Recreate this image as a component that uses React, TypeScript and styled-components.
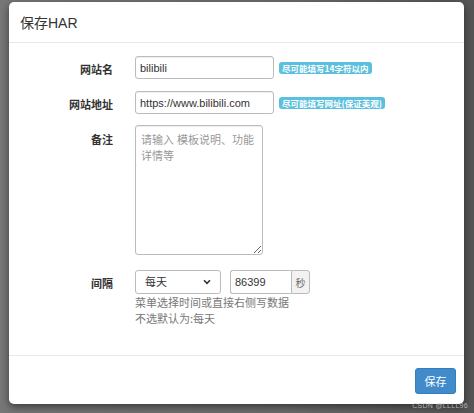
import React from 'react';
import styled, { createGlobalStyle } from 'styled-components';

const GlobalStyle = createGlobalStyle`
  html, body {
    margin: 0;
    padding: 0;
    background: #6d6d6d;
  }
  body {
    font-family: Arial, "Liberation Sans", "Noto Sans CJK SC", sans-serif;
    color: #333;
  }
`;

const Page = styled.div`
  width: 474px;
  height: 413px;
  padding: 2px 10px 0 9px;
  box-sizing: border-box;
  position: relative;
  overflow: hidden;
  background: linear-gradient(90deg, #777 0%, #6d6d6d 60%, #555 100%);
`;

const Modal = styled.div`
  width: 455px;
  height: 402px;
  background: #fff;
  border-radius: 5px;
  box-shadow: 0 3px 9px rgba(0, 0, 0, 0.5);
  display: flex;
  flex-direction: column;
  overflow: hidden;
`;

const Header = styled.div`
  height: 41px;
  padding: 0 11px;
  display: flex;
  align-items: center;
  border-bottom: 1px solid #e8e8e8;
  box-sizing: border-box;
`;

const Title = styled.h4`
  margin: 0;
  font-size: 14px;
  font-weight: normal;
  color: #333;
`;

const Body = styled.div`
  flex: 1;
  padding: 13px 0 0;
  display: flex;
  flex-direction: column;
  gap: 12px;
`;

const Row = styled.div<{ $top?: number }>`
  display: grid;
  grid-template-columns: 104px 1fr;
  column-gap: 22px;
  margin-top: ${(p) => p.$top ?? 0}px;
`;

const Label = styled.label<{ $pad?: number }>`
  text-align: right;
  font-size: 11px;
  font-weight: bold;
  color: #333;
  padding-top: ${(p) => p.$pad ?? 5}px;
`;

const Control = styled.div`
  display: flex;
  align-items: center;
  gap: 5px;
`;

const TextInput = styled.input<{ $w: number }>`
  width: ${(p) => p.$w}px;
  height: 23px;
  box-sizing: border-box;
  border: 1px solid #bbb;
  border-radius: 3px;
  padding: 0 4px;
  font-size: 11px;
  font-family: Arial, "Liberation Sans", sans-serif;
  color: #333;
  box-shadow: inset 0 1px 1px rgba(0, 0, 0, 0.07);
  outline: none;
`;

const Badge = styled.span`
  background: #5bc0de;
  color: #fff;
  font-size: 8.5px;
  font-weight: bold;
  line-height: 12px;
  padding: 0 3px;
  border-radius: 3px;
  white-space: nowrap;
  font-family: "Noto Sans CJK SC", sans-serif;
`;

const TextArea = styled.textarea`
  display: block;
  width: 128px;
  height: 130px;
  box-sizing: border-box;
  border: 1px solid #bbb;
  border-radius: 3px;
  padding: 6px 5px;
  font-size: 11px;
  line-height: 16px;
  font-family: Arial, "Noto Sans CJK SC", sans-serif;
  color: #333;
  resize: vertical;
  outline: none;
  box-shadow: inset 0 1px 1px rgba(0, 0, 0, 0.07);
  &::placeholder {
    color: #999;
  }
`;

const Stack = styled.div`
  display: flex;
  flex-direction: column;
`;

const SelectWrap = styled.div`
  position: relative;
  width: 86px;
  height: 24px;
  margin-right: 4px;
`;

const Select = styled.select`
  appearance: none;
  width: 100%;
  height: 100%;
  box-sizing: border-box;
  border: 1px solid #bbb;
  border-radius: 3px;
  background: #fff;
  padding: 0 9px;
  font-size: 11px;
  font-family: Arial, "Noto Sans CJK SC", sans-serif;
  color: #333;
  outline: none;
`;

const Chevron = styled.svg`
  position: absolute;
  right: 10px;
  top: 9px;
  pointer-events: none;
`;

const InputGroup = styled.div`
  display: flex;
  height: 24px;
`;

const NumberInput = styled.input`
  width: 61px;
  height: 24px;
  box-sizing: border-box;
  border: 1px solid #bbb;
  border-right: none;
  border-radius: 3px 0 0 3px;
  padding: 0 4px;
  font-size: 11px;
  font-family: Arial, "Liberation Sans", sans-serif;
  color: #333;
  outline: none;
`;

const Addon = styled.span`
  width: 19px;
  box-sizing: border-box;
  border: 1px solid #bbb;
  border-radius: 0 3px 3px 0;
  background: #f2f2f2;
  color: #666;
  font-size: 10px;
  display: flex;
  align-items: center;
  justify-content: center;
  font-family: "Noto Sans CJK SC", sans-serif;
`;

const Help = styled.p`
  margin: 0;
  font-size: 11px;
  line-height: 16px;
  color: #777;
  font-family: "Noto Sans CJK SC", sans-serif;
`;

const Footer = styled.div`
  height: 49px;
  border-top: 1px solid #e8e8e8;
  display: flex;
  align-items: center;
  justify-content: flex-end;
  padding: 0 8px;
  box-sizing: border-box;
`;

const Button = styled.button`
  width: 41px;
  height: 26px;
  border: 1px solid #357ebd;
  border-radius: 3px;
  background: #428bca;
  color: #fff;
  font-size: 11px;
  font-family: "Noto Sans CJK SC", sans-serif;
  padding: 0;
  margin-top: 1px;
`;

const Watermark = styled.span`
  position: absolute;
  right: 6px;
  bottom: 4px;
  font-size: 7px;
  color: rgba(200, 200, 200, 0.85);
  letter-spacing: 0.3px;
`;

export default function App() {
  return (
    <>
      <GlobalStyle />
      <Page>
        <Modal>
          <Header>
            <Title>保存HAR</Title>
          </Header>
          <Body>
            <Row>
              <Label>网站名</Label>
              <Control>
                <TextInput $w={139} defaultValue="bilibili" />
                <Badge>尽可能填写14字符以内</Badge>
              </Control>
            </Row>
            <Row>
              <Label>网站地址</Label>
              <Control>
                <TextInput $w={139} defaultValue="https://www.bilibili.com" />
                <Badge>尽可能填写网址(保证美观)</Badge>
              </Control>
            </Row>
            <Row $top={-1}>
              <Label $pad={6}>备注</Label>
              <div>
                <TextArea placeholder="请输入 模板说明、功能详情等" />
              </div>
            </Row>
            <Row $top={3}>
              <Label $pad={5}>间隔</Label>
              <Stack>
                <Control>
                  <SelectWrap>
                    <Select defaultValue="day">
                      <option value="day">每天</option>
                    </Select>
                    <Chevron width="8" height="6" viewBox="0 0 8 6">
                      <path d="M1 1.2 L4 4.4 L7 1.2" fill="none" stroke="#333" strokeWidth="1.6" />
                    </Chevron>
                  </SelectWrap>
                  <InputGroup>
                    <NumberInput defaultValue="86399" />
                    <Addon>秒</Addon>
                  </InputGroup>
                </Control>
                <Help>菜单选择时间或直接右侧写数据</Help>
                <Help>不选默认为:每天</Help>
              </Stack>
            </Row>
          </Body>
          <Footer>
            <Button>保存</Button>
          </Footer>
        </Modal>
        <Watermark>CSDN @LLLL96</Watermark>
      </Page>
    </>
  );
}
